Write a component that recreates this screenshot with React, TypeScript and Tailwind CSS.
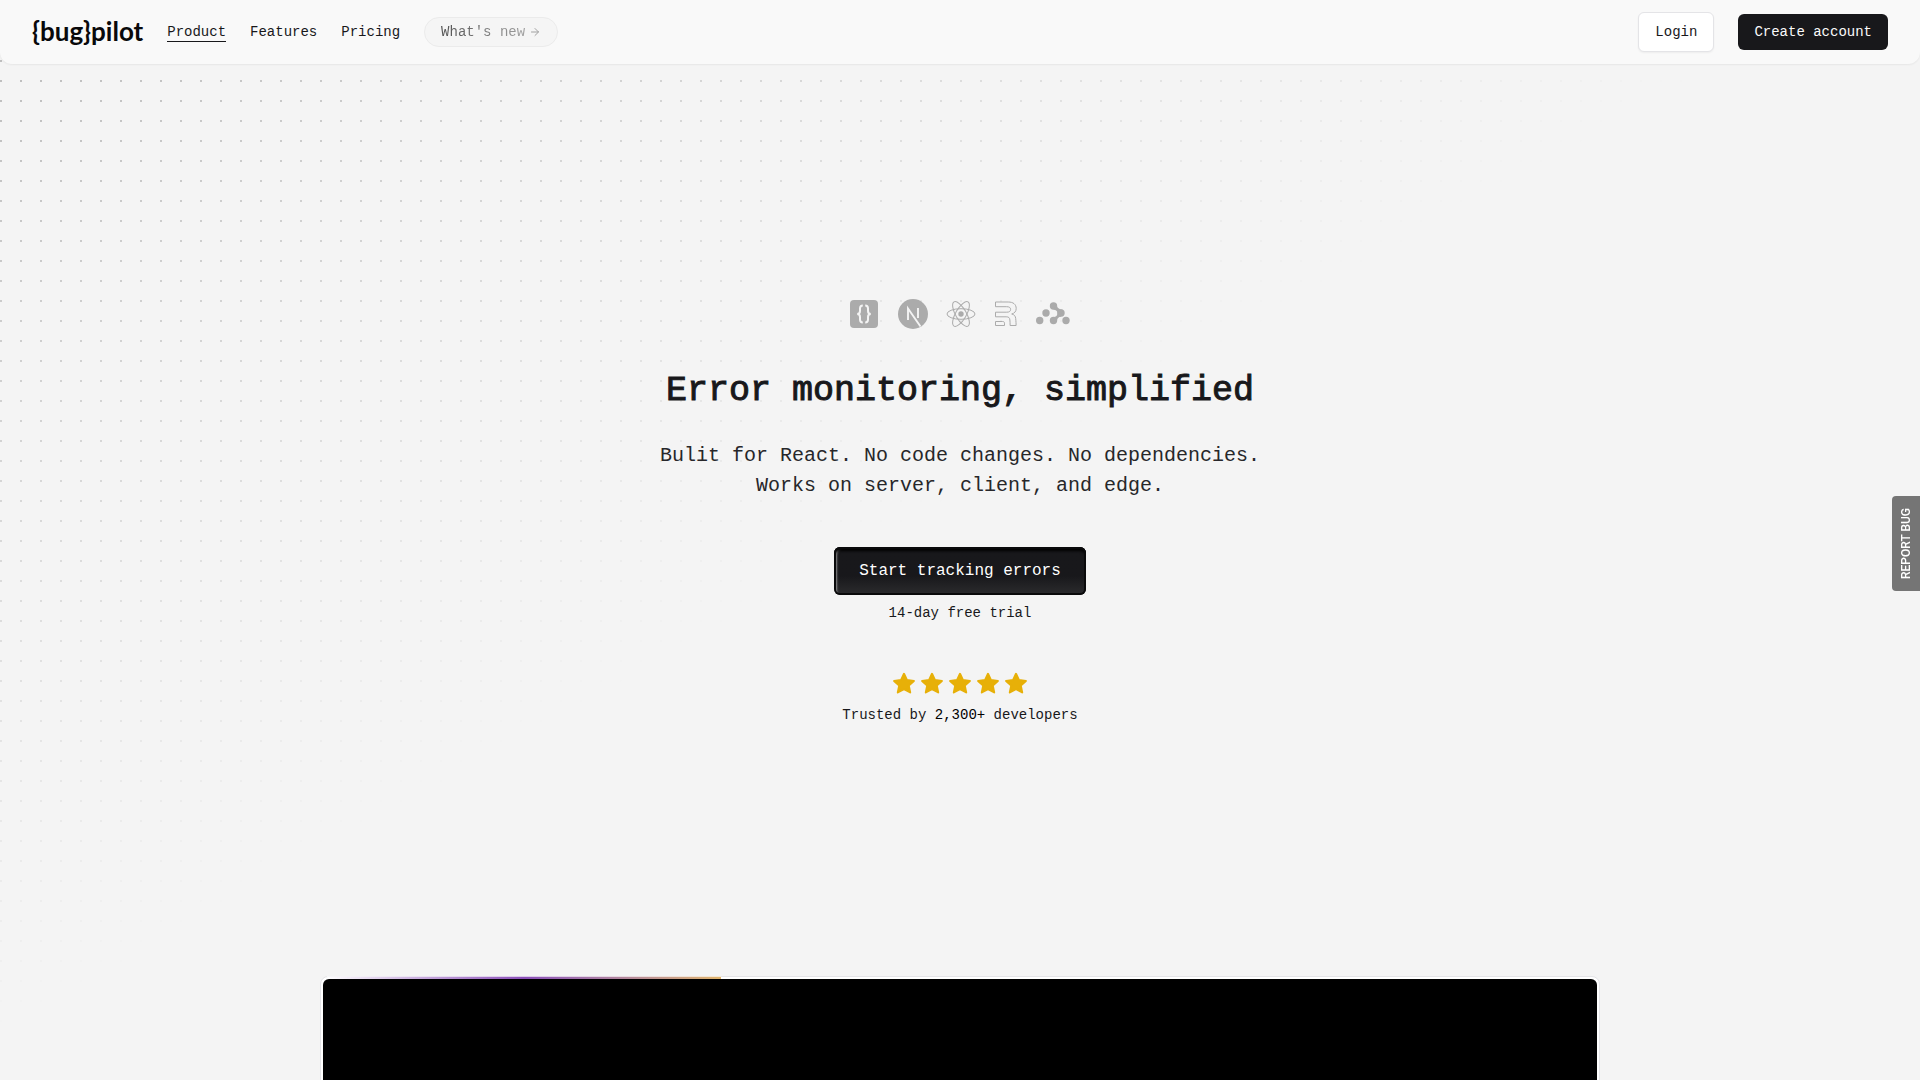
import { ArrowRight } from 'lucide-react';

interface NavItem {
  label: string;
  href: string;
  active?: boolean;
}

const navItems: NavItem[] = [
  { label: 'Product', href: '#product', active: true },
  { label: 'Features', href: '#features' },
  { label: 'Pricing', href: '#pricing' },
];

function Header() {
  return (
    <header className="relative flex h-16 items-center justify-between rounded-b-xl bg-[#f9f9f9] px-8 shadow-[0_1px_2px_rgba(0,0,0,0.06)]">
      <nav className="flex items-center gap-6 text-sm">
        <a href="#home" className="font-['Lato',sans-serif] text-[26px] font-bold text-zinc-950">
          {'{bug}pilot'}
        </a>
        {navItems.map(({ label, href, active }) => (
          <a
            key={label}
            href={href}
            className={`border-b pt-0.5 leading-[17px] ${active ? 'border-zinc-900' : 'border-transparent'}`}
          >
            {label}
          </a>
        ))}
        <a
          href="#changelog"
          className="flex items-center gap-1 rounded-full border border-[#ebebeb] bg-[#f5f5f5] px-4 py-1 text-neutral-400"
        >
          <span className="bg-linear-to-r from-neutral-600 to-neutral-400 bg-clip-text text-transparent">What's new</span>
          <ArrowRight size={12} />
        </a>
      </nav>
      <div className="flex items-center gap-6 text-sm">
        <a href="#login" className="rounded-md border border-zinc-200 bg-white px-4 py-2 leading-5 shadow-xs">
          <span className="block py-px">Login</span>
        </a>
        <a href="#signup" className="rounded-md bg-zinc-900 px-4 py-2 leading-5 text-zinc-50">
          Create account
        </a>
      </div>
    </header>
  );
}

function BracesLogo() {
  return (
    <svg width="28" height="28" viewBox="0 0 28 28" fill="none">
      <rect width="28" height="28" rx="4" fill="#ababab" />
      <path
        d="M12.800 5.500C10.500 5.500 10 6.500 10 8.500V11c0 2-.6 3-2.800 3 2.200 0 2.800 1 2.800 3v2.500c0 2 .5 3 2.800 3M15.200 5.500c2.300 0 2.800 1 2.800 3V11c0 2 .6 3 2.800 3-2.200 0-2.800 1-2.800 3v2.500c0 2-.5 3-2.800 3"
        stroke="#f4f4f4"
        strokeWidth="2"
      />
    </svg>
  );
}

function NextLogo() {
  return (
    <svg width="32" height="30" viewBox="-2 0 32 30" fill="none">
      <circle cx="15" cy="15" r="15" fill="#ababab" />
      <path d="M10 21V9.500L22.500 27.500M20 9v10" stroke="#f4f4f4" strokeWidth="1.9" />
    </svg>
  );
}

function ReactLogo() {
  return (
    <svg width="30" height="28" viewBox="-15 -14 30 28" fill="none" stroke="#ababab">
      <circle r="2.7" fill="#ababab" stroke="none" />
      <ellipse rx="14" ry="5.3" />
      <ellipse rx="14" ry="5.3" transform="rotate(60)" />
      <ellipse rx="14" ry="5.3" transform="rotate(120)" />
    </svg>
  );
}

function RemixLogo() {
  return (
    <svg width="24" height="26" viewBox="0 0 24 26" fill="none" stroke="#ababab">
      <path d="M1.500 1h12.700c5 0 8 2.300 8 6.500 0 3-1.800 4.800-4.500 5.500 2.500.6 3.800 2 4 4.500.3 3 .4 5 .4 7h-6c0-2 0-3.500-.2-5.500-.2-2.300-1.200-3.200-3.700-3.200H1.500v-4.600h11.200c2.600 0 3.900-.9 3.900-2.800 0-1.800-1.300-2.700-3.900-2.700H1.500zM1.500 24.500v-4h7.200c1.200 0 1.800.6 1.800 1.700v2.300z" />
    </svg>
  );
}

function ReactRouterLogo() {
  return (
    <svg width="34" height="24" viewBox="0 0 34 24" fill="#ababab">
      <circle cx="17.5" cy="4" r="3.7" />
      <circle cx="10" cy="11" r="3.7" />
      <circle cx="3.7" cy="18.500" r="3.7" />
      <circle cx="17.5" cy="18.5" r="3.7" />
      <circle cx="30" cy="18.5" r="3.7" />
      <circle cx="25" cy="11" r="3.7" />
      <path d="M20.5 2.500c1 4 2.500 4.500 6 5.200l-1.500 7c-2.500.2-3.500 1-4.500 5.500l-3-5c2.500-.5 4-1.500 4-4s-1.500-3.200-4-3.800z" />
    </svg>
  );
}

function Star() {
  return (
    <svg width="24" height="24" viewBox="0 0 24 24" fill="#e7b008" stroke="#e7b008" strokeWidth="2" strokeLinejoin="round">
      <path d="M12 2.800l3 6.300 6.900.8-5.100 4.700 1.400 6.800-6.200-3.400-6.200 3.400 1.400-6.800-5.100-4.700 6.900-.8z" />
    </svg>
  );
}

function Hero() {
  return (
    <section className="relative flex flex-col items-center pt-[235px] text-center">
      <div className="flex items-center gap-[18px]">
        <BracesLogo />
        <NextLogo />
        <ReactLogo />
        <RemixLogo />
        <ReactRouterLogo />
      </div>
      <h1 className="mt-10 text-[35px] leading-[44px] text-zinc-900 [-webkit-text-stroke:1px]">
        Error monitoring, simplified
      </h1>
      <p className="mt-7 text-xl leading-[30px] text-zinc-800">
        Bulit for React. No code changes. No dependencies.
        <br />
        Works on server, client, and edge.
      </p>
      <button
        type="button"
        className="mt-[46px] h-12 rounded-md bg-linear-to-b from-zinc-900 from-60% to-[#2c2c2e] px-[25px] text-base text-white shadow-[inset_0_0_0_2px_#0a0a0b,inset_0_5px_3px_-1px_#000,inset_4px_2px_2px_-1px_rgba(255,255,255,0.5)]"
      >
        Start tracking errors
      </button>
      <p className="mt-2 text-sm">14-day free trial</p>
      <div className="mt-12 flex gap-1" role="img" aria-label="5 stars">
        {[1, 2, 3, 4, 5].map((n) => (
          <Star key={n} />
        ))}
      </div>
      <p className="mt-2.5 text-sm">
        Trusted by <span className="text-black">2,300+</span> developers
      </p>
    </section>
  );
}

function VideoCard() {
  return (
    <div className="relative mx-auto mt-[251px] w-full max-w-[1280px] rounded-lg border border-zinc-200 bg-white p-0.5">
      <div className="absolute -top-px left-1.5 h-1 w-[394px] border-t border-white/70 bg-linear-to-r from-transparent via-[#8a4fb8] to-[#e0b46c]" />
      <div className="relative aspect-video rounded-md bg-black" />
    </div>
  );
}

export default function App() {
  return (
    <div className="relative h-screen overflow-hidden bg-[#f4f4f4] font-['Liberation_Mono',monospace] text-zinc-900">
      {/* Dot grid */}
      <div className="absolute inset-0 bg-[conic-gradient(at_2px_2px,transparent_75%,#bababa_0)] bg-size-[20px_20px] mask-[linear-gradient(to_bottom_right,#000,transparent_48%)]" />
      <Header />
      <Hero />
      <VideoCard />
      <button
        type="button"
        className="absolute top-[496px] right-0 rotate-180 rounded-r-sm bg-[#757575] px-3 py-1.5 font-['Roboto',sans-serif] text-xs font-medium text-white [writing-mode:vertical-rl]"
      >
        REPORT BUG
      </button>
    </div>
  );
}
